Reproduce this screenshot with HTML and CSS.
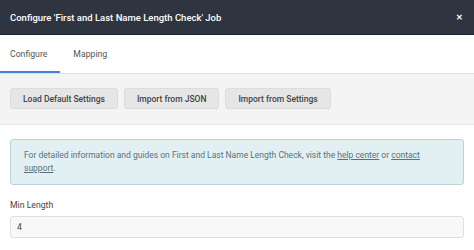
FILE: index.html
```html
<!DOCTYPE html>
<html lang="en">
<head>
    <meta charset="UTF-8">
    <title>Configure Job</title>
    <link rel="stylesheet" href="styles.css">
</head>
<body>

<div class="modal">
    <header class="modal-header">
        <h1>Configure 'First and Last Name Length Check' Job</h1>
        <button class="close-btn" aria-label="Close">&#10005;</button>
    </header>

    <nav class="tabs">
        <a class="tab active" href="#">Configure</a>
        <a class="tab" href="#">Mapping</a>
    </nav>

    <div class="toolbar">
        <button class="btn">Load Default Settings</button>
        <button class="btn">Import from JSON</button>
        <button class="btn">Import from Settings</button>
    </div>

    <section class="body">
        <div class="info-box">
            For detailed information and guides on First and Last Name Length Check, visit the <a href="#">help center</a> or <a href="#">contact support</a>.
        </div>

        <label class="field-label" for="min-length">Min Length</label>
        <input class="field-input" id="min-length" type="text" value="4">
    </section>
</div>

</body>
</html>
```

FILE: styles.css
```css
body {
    margin: 0;
    font-family: Roboto, "Liberation Sans", sans-serif;
    color: #4a4a4a;
    background-color: #ffffff;
}
.modal-header {
    height: 35px;
    background-color: #2e3440;
    border-bottom: 1px solid #1f242c;
    display: flex;
    align-items: center;
    justify-content: space-between;
    padding: 0 10px;
    box-sizing: border-box;
}
.modal-header h1 {
    margin: 0;
    font-size: 9.5px;
    font-weight: 500;
    color: #ffffff;
}
.close-btn {
    background: none;
    border: none;
    color: #ffffff;
    font-size: 8px;
    font-weight: bold;
    padding: 0 1px;
    cursor: pointer;
}
.tabs {
    display: flex;
    height: 38px;
    border-bottom: 1px solid #e0e0e0;
}
.tab {
    display: flex;
    align-items: center;
    padding: 2px 13px 0 10px;
    font-size: 8.7px;
    color: #555555;
    text-decoration: none;
    border-bottom: 2px solid transparent;
}
.tab.active {
    border-bottom-color: #4a7fe0;
}
.tab + .tab {
    padding-left: 13px;
}
.toolbar {
    display: flex;
    gap: 6px;
    padding: 14px 10px 15px;
    background-color: #f4f4f4;
    border-bottom: 1px solid #e8e8e8;
}
.btn {
    font-family: inherit;
    font-size: 8.5px;
    font-weight: 500;
    color: #444444;
    background-color: #e6e6e6;
    border: 1px solid #dcdcdc;
    border-radius: 3px;
    padding: 0 12px;
    height: 21px;
    cursor: pointer;
}
.body {
    padding: 14px 10px;
}
.info-box {
    background-color: #e3f0f3;
    border: 1px solid #b9d5da;
    border-radius: 3px;
    padding: 9px 13px 9px;
    font-size: 8.5px;
    line-height: 13px;
    color: #587378;
}
.info-box a {
    color: #587378;
}
.field-label {
    display: block;
    margin-top: 14px;
    margin-bottom: 4px;
    font-size: 8.7px;
    line-height: 13px;
    color: #444444;
}
.field-input {
    display: block;
    width: 100%;
    box-sizing: border-box;
    height: 22px;
    padding: 0 6px;
    font-family: inherit;
    font-size: 8.7px;
    color: #444444;
    background-color: #f8f8f8;
    border: 1px solid #e0e0e0;
    border-radius: 3px;
}
```
